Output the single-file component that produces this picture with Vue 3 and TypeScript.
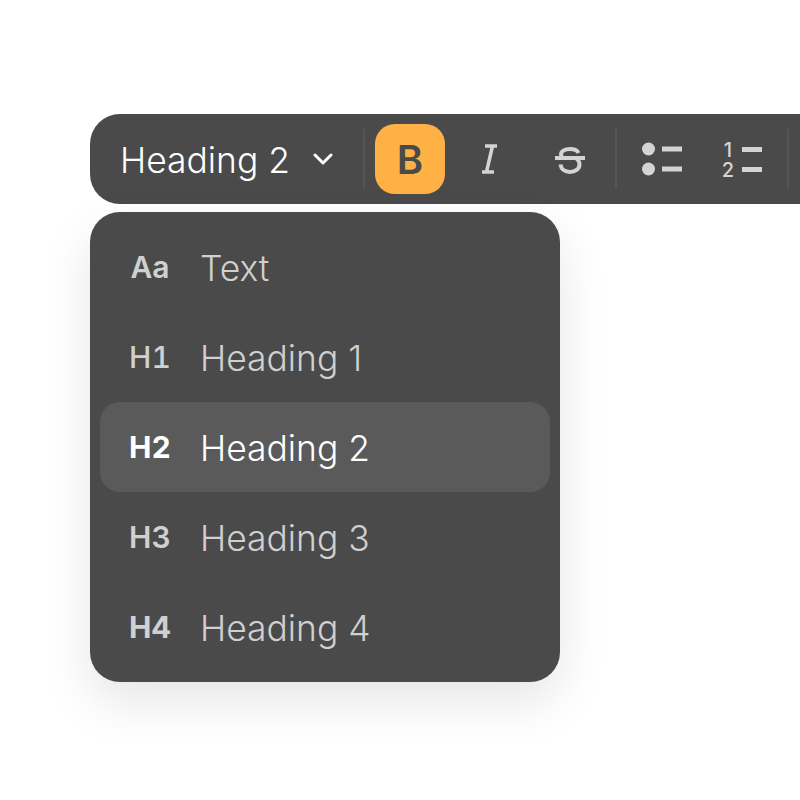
<script setup lang="ts">
const items = [
  { tag: "Aa", label: "Text", weight: 600 },
  { tag: "H1", label: "Heading 1", weight: 500 },
  { tag: "H2", label: "Heading 2", weight: 700, active: true },
  { tag: "H3", label: "Heading 3", weight: 600 },
  { tag: "H4", label: "Heading 4", weight: 700 },
];
</script>

<template>
  <div class="page">
    <div class="toolbar">
      <button class="select">
        <span class="select-text">Heading 2</span>
        <svg width="20" height="12" viewBox="0 0 20 12" fill="none">
          <path d="M2 2 L10 10 L18 2" stroke="#fff" stroke-width="3" stroke-linecap="round" stroke-linejoin="round" />
        </svg>
      </button>
      <div class="sep"></div>
      <button class="tool bold">B</button>
      <button class="tool">
        <svg width="30" height="30" viewBox="0 0 30 30" fill="none">
          <path d="M10 2 H22 M7 28 H19 M17.5 2 L11.5 28" stroke="#d4d4d4" stroke-width="3.5" />
        </svg>
      </button>
      <button class="tool">
        <svg width="32" height="30" viewBox="0 0 32 30" fill="none">
          <path d="M24.5 9 C23.5 6.5 20 5 16 5 C11 5 7 7 7 10.5 C7 12 7.5 13 9 14" stroke="#d4d4d4" stroke-width="4" />
          <path d="M6.5 20.5 C7 25 11 28 16 28 C21 28 25.5 25 25.5 20.5 C25.5 18 24.5 16 22 14" stroke="#d4d4d4" stroke-width="4" />
          <path d="M1 14 H31" stroke="#d4d4d4" stroke-width="4" />
        </svg>
      </button>
      <div class="sep"></div>
      <button class="tool">
        <svg width="40" height="40" viewBox="0 0 40 40" fill="none">
          <circle cx="6.5" cy="10" r="6.5" fill="#d4d4d4" />
          <circle cx="6.5" cy="30" r="6.5" fill="#d4d4d4" />
          <rect x="20" y="7.5" width="20" height="5" fill="#d4d4d4" />
          <rect x="20" y="27.5" width="20" height="5" fill="#d4d4d4" />
        </svg>
      </button>
      <button class="tool numbered">
        <span class="digits"><b>1</b><b>2</b></span>
        <span class="bars"><i></i><i></i></span>
      </button>
      <div class="sep"></div>
    </div>

    <div class="menu">
      <div v-for="item in items" :key="item.tag" class="row" :class="{ active: item.active }">
        <span class="tag" :style="{ fontWeight: item.weight }">{{ item.tag }}</span>
        <span class="label">{{ item.label }}</span>
      </div>
    </div>
  </div>
</template>

<style>
html, body { background: #fff; overflow: hidden; }
</style>

<style scoped>
.page {
  width: 800px;
  height: 800px;
  overflow: hidden;
  padding: 114px 0 0 90px;
  box-sizing: border-box;
  font-family: Inter, "Noto Sans", sans-serif;
}
button {
  border: 0;
  padding: 0;
  background: none;
  font-family: inherit;
  color: inherit;
}
.toolbar {
  display: flex;
  align-items: center;
  gap: 10px;
  width: 900px;
  height: 90px;
  background: #4a4a4a;
  border-radius: 30px;
  box-sizing: border-box;
  padding-left: 30px;
}
.select {
  display: flex;
  align-items: center;
  gap: 23px;
  width: 233px;
  font-size: 35.4px;
  font-weight: 300;
  line-height: 40px;
  color: #fff;
  flex: none;
}
.select-text {
  padding-top: 3px;
}
.sep {
  width: 2px;
  height: 60px;
  background: #555;
  flex: none;
}
.tool {
  display: flex;
  align-items: center;
  justify-content: center;
  width: 70px;
  height: 70px;
  flex: none;
  color: #d4d4d4;
}
.bold {
  background: #ffb146;
  border-radius: 20px;
  color: #4a4a4a;
  font-size: 40px;
  font-weight: 600;
}
.numbered {
  gap: 8px;
}
.digits {
  display: flex;
  flex-direction: column;
  margin-top: 2px;
  font-size: 20px;
  line-height: 20px;
}
.digits b {
  font-weight: 500;
}
.bars {
  display: flex;
  flex-direction: column;
  gap: 15px;
}
.bars i {
  display: block;
  width: 20px;
  height: 5px;
  background: #d4d4d4;
}
.menu {
  width: 470px;
  height: 470px;
  box-sizing: border-box;
  margin-top: 8px;
  padding: 10px;
  background: #4a4a4a;
  border-radius: 30px;
  box-shadow: 0 20px 50px rgba(0, 0, 0, 0.1);
}
.row {
  display: flex;
  align-items: center;
  height: 90px;
  border-radius: 20px;
  color: #d0d0d0;
}
.row.active {
  background: #5a5a5a;
  color: #fff;
}
.tag {
  width: 100px;
  text-align: center;
  font-size: 30px;
  font-variant-numeric: tabular-nums;
}
.label {
  padding-top: 3px;
  font-size: 35.4px;
  font-weight: 300;
  line-height: 40px;
}
</style>
